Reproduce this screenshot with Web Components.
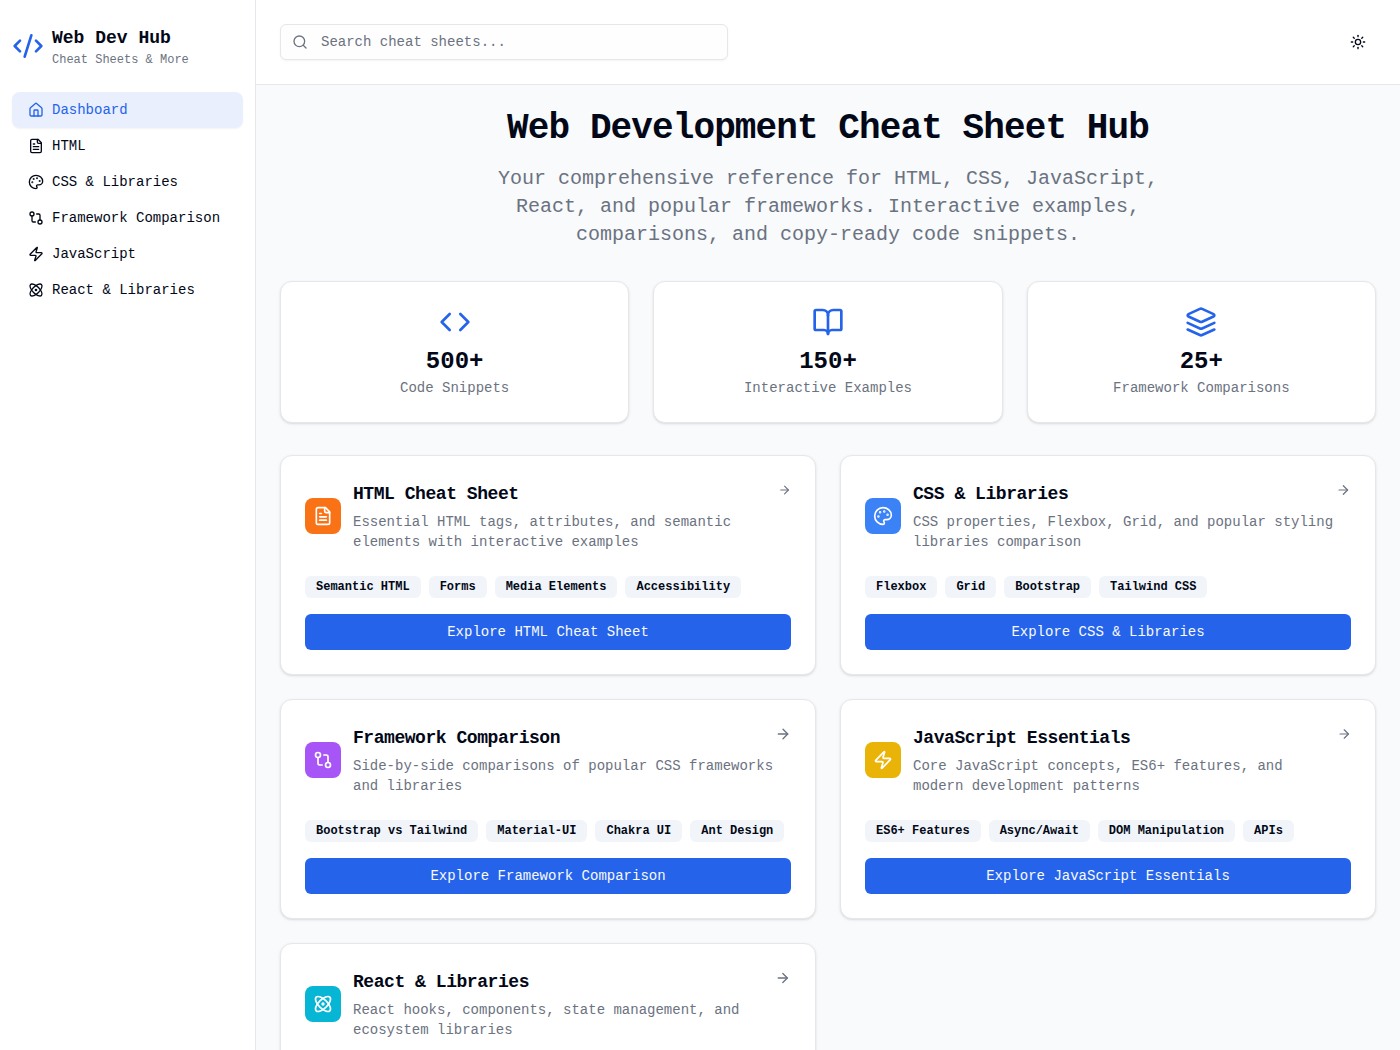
<!DOCTYPE html>
<html lang="en">
<head>
<meta charset="utf-8">
<title>Web Dev Hub</title>
<style>
    html, body { margin: 0; height: 100%; }
    body { font-family: "Liberation Mono", monospace; color: #020817; background: #fff; overflow: hidden; }
</style>
</head>
<body>
<dev-app>
    <app-sidebar slot="side">
        <nav-item icon="home" active>Dashboard</nav-item>
        <nav-item icon="file">HTML</nav-item>
        <nav-item icon="palette">CSS &amp; Libraries</nav-item>
        <nav-item icon="compare">Framework Comparison</nav-item>
        <nav-item icon="zap">JavaScript</nav-item>
        <nav-item icon="atom">React &amp; Libraries</nav-item>
    </app-sidebar>
    <top-bar slot="top"></top-bar>
    <hero-block heading="Web Development Cheat Sheet Hub">Your comprehensive reference for HTML, CSS, JavaScript, React, and popular frameworks. Interactive examples, comparisons, and copy-ready code snippets.</hero-block>
    <stat-row>
        <stat-card icon="code" value="500+">Code Snippets</stat-card>
        <stat-card icon="book" value="150+">Interactive Examples</stat-card>
        <stat-card icon="layers" value="25+">Framework Comparisons</stat-card>
    </stat-row>
    <sheet-grid>
        <sheet-card icon="file" color="#f97316" heading="HTML Cheat Sheet">
            Essential HTML tags, attributes, and semantic elements with interactive examples
            <tag-chip slot="tags">Semantic HTML</tag-chip>
            <tag-chip slot="tags">Forms</tag-chip>
            <tag-chip slot="tags">Media Elements</tag-chip>
            <tag-chip slot="tags">Accessibility</tag-chip>
        </sheet-card>
        <sheet-card icon="palette" color="#3b82f6" heading="CSS &amp; Libraries">
            CSS properties, Flexbox, Grid, and popular styling libraries comparison
            <tag-chip slot="tags">Flexbox</tag-chip>
            <tag-chip slot="tags">Grid</tag-chip>
            <tag-chip slot="tags">Bootstrap</tag-chip>
            <tag-chip slot="tags">Tailwind CSS</tag-chip>
        </sheet-card>
        <sheet-card icon="compare" color="#a855f7" heading="Framework Comparison">
            Side-by-side comparisons of popular CSS frameworks and libraries
            <tag-chip slot="tags">Bootstrap vs Tailwind</tag-chip>
            <tag-chip slot="tags">Material-UI</tag-chip>
            <tag-chip slot="tags">Chakra UI</tag-chip>
            <tag-chip slot="tags">Ant Design</tag-chip>
        </sheet-card>
        <sheet-card icon="zap" color="#eab308" heading="JavaScript Essentials">
            Core JavaScript concepts, ES6+ features, and modern development patterns
            <tag-chip slot="tags">ES6+ Features</tag-chip>
            <tag-chip slot="tags">Async/Await</tag-chip>
            <tag-chip slot="tags">DOM Manipulation</tag-chip>
            <tag-chip slot="tags">APIs</tag-chip>
        </sheet-card>
        <sheet-card icon="atom" color="#06b6d4" heading="React &amp; Libraries">
            React hooks, components, state management, and ecosystem libraries
        </sheet-card>
    </sheet-grid>
</dev-app>
<script>
const ICONS = {
    codexml: '<path d="m18 16 4-4-4-4"/><path d="m6 8-4 4 4 4"/><path d="m14.5 4-5 16"/>',
    code: '<path d="m16 18 6-6-6-6"/><path d="m8 6-6 6 6 6"/>',
    home: '<path d="M15 21v-8a1 1 0 0 0-1-1h-4a1 1 0 0 0-1 1v8"/><path d="M3 10a2 2 0 0 1 .709-1.528l7-5.999a2 2 0 0 1 2.582 0l7 5.999A2 2 0 0 1 21 10v9a2 2 0 0 1-2 2H5a2 2 0 0 1-2-2z"/>',
    file: '<path d="M15 2H6a2 2 0 0 0-2 2v16a2 2 0 0 0 2 2h12a2 2 0 0 0 2-2V7Z"/><path d="M14 2v4a2 2 0 0 0 2 2h4"/><path d="M10 9H8"/><path d="M16 13H8"/><path d="M16 17H8"/>',
    palette: '<circle cx="13.5" cy="6.5" r=".5" fill="currentColor"/><circle cx="17.5" cy="10.5" r=".5" fill="currentColor"/><circle cx="8.5" cy="7.5" r=".5" fill="currentColor"/><circle cx="6.5" cy="12.5" r=".5" fill="currentColor"/><path d="M12 2C6.5 2 2 6.5 2 12s4.5 10 10 10c.926 0 1.648-.746 1.648-1.688 0-.437-.18-.835-.437-1.125-.29-.289-.438-.652-.438-1.125a1.64 1.64 0 0 1 1.668-1.668h1.996c3.051 0 5.555-2.503 5.555-5.554C21.965 6.012 17.461 2 12 2z"/>',
    compare: '<circle cx="18" cy="18" r="3"/><circle cx="6" cy="6" r="3"/><path d="M13 6h3a2 2 0 0 1 2 2v7"/><path d="M11 18H8a2 2 0 0 1-2-2V9"/>',
    zap: '<path d="M4 14a1 1 0 0 1-.78-1.63l9.9-10.2a.5.5 0 0 1 .86.46l-1.92 6.02A1 1 0 0 0 13 10h7a1 1 0 0 1 .78 1.63l-9.9 10.2a.5.5 0 0 1-.86-.46l1.92-6.02A1 1 0 0 0 11 14z"/>',
    atom: '<circle cx="12" cy="12" r="1"/><path d="M20.2 20.2c2.04-2.03.02-7.36-4.5-11.9-4.54-4.52-9.87-6.54-11.9-4.5-2.04 2.03-.02 7.36 4.5 11.9 4.54 4.52 9.87 6.54 11.9 4.5Z"/><path d="M15.7 15.7c4.52-4.54 6.54-9.87 4.5-11.9-2.03-2.04-7.36-.02-11.9 4.5-4.52 4.54-6.54 9.87-4.5 11.9 2.03 2.04 7.36.02 11.9-4.5Z"/>',
    book: '<path d="M12 7v14"/><path d="M3 18a1 1 0 0 1-1-1V4a1 1 0 0 1 1-1h5a4 4 0 0 1 4 4 4 4 0 0 1 4-4h5a1 1 0 0 1 1 1v13a1 1 0 0 1-1 1h-6a3 3 0 0 0-3 3 3 3 0 0 0-3-3z"/>',
    layers: '<path d="m12.83 2.18a2 2 0 0 0-1.66 0L2.6 6.08a1 1 0 0 0 0 1.83l8.58 3.91a2 2 0 0 0 1.66 0l8.58-3.9a1 1 0 0 0 0-1.83Z"/><path d="m22 17.65-9.17 4.16a2 2 0 0 1-1.66 0L2 17.65"/><path d="m22 12.65-9.17 4.16a2 2 0 0 1-1.66 0L2 12.65"/>',
    search: '<path d="m21 21-4.3-4.3"/><circle cx="11" cy="11" r="8"/>',
    sun: '<circle cx="12" cy="12" r="4"/><path d="M12 2v2"/><path d="M12 20v2"/><path d="m4.93 4.93 1.41 1.41"/><path d="m17.66 17.66 1.41 1.41"/><path d="M2 12h2"/><path d="M20 12h2"/><path d="m6.34 17.66-1.41 1.41"/><path d="m19.07 4.93-1.41 1.41"/>',
    arrow: '<path d="M5 12h14"/><path d="m12 5 7 7-7 7"/>'
};

class UiIcon extends HTMLElement {
    connectedCallback() {
        var size = this.getAttribute("size") || 16;
        var shadowRoot = this.shadowRoot || this.attachShadow({ mode: 'open' });
        shadowRoot.innerHTML = `
            <style>
                :host { display: block; width: ${size}px; height: ${size}px; min-width: 0; }
                svg { display: block; width: 100%; height: 100%; }
            </style>
            <svg viewBox="0 0 24 24" fill="none" stroke="currentColor" stroke-width="2" stroke-linecap="round" stroke-linejoin="round">${ICONS[this.getAttribute("name")]}</svg>
        `;
    }
}
customElements.define('ui-icon', UiIcon);

class DevApp extends HTMLElement {
    constructor() {
        super();
        var shadowRoot = this.attachShadow({ mode: 'open' });
        shadowRoot.innerHTML = `
            <style>
                :host { display: flex; height: 1050px; overflow: hidden; }
                .right { flex: 1; min-width: 0; display: flex; flex-direction: column; }
                main { flex: 1; min-height: 0; overflow: hidden; background: #f8fafc; padding: 24px; }
            </style>
            <slot name="side"></slot>
            <div class="right">
                <slot name="top"></slot>
                <main><slot></slot></main>
            </div>
        `;
    }
}
customElements.define('dev-app', DevApp);

class AppSidebar extends HTMLElement {
    constructor() {
        super();
        var shadowRoot = this.attachShadow({ mode: 'open' });
        shadowRoot.innerHTML = `
            <style>
                :host { display: block; flex: none; box-sizing: border-box; width: 256px; height: 100%; background: #fff; border-right: 1px solid #e5e7eb; padding: 24px 12px; }
                .logo { display: flex; align-items: center; gap: 8px; color: #2563eb; margin-bottom: 24px; }
                .name { font-size: 18px; line-height: 28px; font-weight: 700; color: #020817; }
                .sub { font-size: 12px; line-height: 16px; color: #6b7280; }
                nav { display: flex; flex-direction: column; }
            </style>
            <div class="logo">
                <ui-icon name="codexml" size="32"></ui-icon>
                <div>
                    <div class="name">Web Dev Hub</div>
                    <div class="sub">Cheat Sheets &amp; More</div>
                </div>
            </div>
            <nav><slot></slot></nav>
        `;
    }
}
customElements.define('app-sidebar', AppSidebar);

class NavItem extends HTMLElement {
    connectedCallback() {
        var shadowRoot = this.shadowRoot || this.attachShadow({ mode: 'open' });
        shadowRoot.innerHTML = `
            <style>
                :host { display: flex; align-items: center; gap: 8px; height: 36px; padding: 0 16px; border-radius: 8px; font-size: 14px; color: #020817; }
                :host([active]) { background: #e9effd; color: #2563eb; box-shadow: 0 1px 2px rgba(0,0,0,.05); }
            </style>
            <ui-icon name="${this.getAttribute("icon")}"></ui-icon>
            <span><slot></slot></span>
        `;
    }
}
customElements.define('nav-item', NavItem);

class TopBar extends HTMLElement {
    constructor() {
        super();
        var shadowRoot = this.attachShadow({ mode: 'open' });
        shadowRoot.innerHTML = `
            <style>
                :host { display: flex; flex: none; align-items: center; justify-content: space-between; box-sizing: border-box; height: 85px; padding: 0 24px; background: #fff; border-bottom: 1px solid #e5e7eb; }
                .search { box-sizing: border-box; width: 448px; height: 36px; display: flex; align-items: center; gap: 13px; padding: 0 12px 0 11px; border: 1px solid #e5e7eb; border-radius: 6px; box-shadow: 0 1px 2px rgba(0,0,0,.05); font-size: 14px; color: #6b7280; background: #fefefe; }
                .theme { width: 36px; height: 36px; display: flex; align-items: center; justify-content: center; color: #020817; }
            </style>
            <div class="search">
                <ui-icon name="search"></ui-icon>
                <span>Search cheat sheets...</span>
            </div>
            <div class="theme"><ui-icon name="sun"></ui-icon></div>
        `;
    }
}
customElements.define('top-bar', TopBar);

class HeroBlock extends HTMLElement {
    connectedCallback() {
        var shadowRoot = this.shadowRoot || this.attachShadow({ mode: 'open' });
        shadowRoot.innerHTML = `
            <style>
                :host { display: block; text-align: center; margin-bottom: 32px; }
                h1 { margin: 0 0 16px; font-size: 36px; line-height: 40px; font-weight: 700; letter-spacing: -0.9px; color: #020817; }
                p { margin: 0 auto; max-width: 672px; font-size: 20px; line-height: 28px; color: #6b7280; }
            </style>
            <h1>${this.getAttribute("heading")}</h1>
            <p><slot></slot></p>
        `;
    }
}
customElements.define('hero-block', HeroBlock);

class StatRow extends HTMLElement {
    constructor() {
        super();
        var shadowRoot = this.attachShadow({ mode: 'open' });
        shadowRoot.innerHTML = `
            <style>
                :host { display: grid; grid-template-columns: repeat(3, 1fr); gap: 24px; margin-bottom: 32px; }
            </style>
            <slot></slot>
        `;
    }
}
customElements.define('stat-row', StatRow);

class StatCard extends HTMLElement {
    connectedCallback() {
        var shadowRoot = this.shadowRoot || this.attachShadow({ mode: 'open' });
        shadowRoot.innerHTML = `
            <style>
                :host { display: flex; flex-direction: column; align-items: center; padding: 24px; background: #fff; border: 1px solid #e5e7eb; border-radius: 12px; box-shadow: 0 1px 3px rgba(0,0,0,.1), 0 1px 2px -1px rgba(0,0,0,.1); text-align: center; }
                ui-icon { color: #2563eb; margin-bottom: 8px; }
                .value { font-size: 24px; line-height: 32px; font-weight: 700; color: #020817; }
                .label { font-size: 14px; line-height: 20px; color: #6b7280; }
            </style>
            <ui-icon name="${this.getAttribute("icon")}" size="32"></ui-icon>
            <div class="value">${this.getAttribute("value")}</div>
            <div class="label"><slot></slot></div>
        `;
    }
}
customElements.define('stat-card', StatCard);

class SheetGrid extends HTMLElement {
    constructor() {
        super();
        var shadowRoot = this.attachShadow({ mode: 'open' });
        shadowRoot.innerHTML = `
            <style>
                :host { display: grid; grid-template-columns: repeat(2, 1fr); gap: 24px; }
            </style>
            <slot></slot>
        `;
    }
}
customElements.define('sheet-grid', SheetGrid);

class SheetCard extends HTMLElement {
    connectedCallback() {
        var heading = this.getAttribute("heading").replace("&", "&amp;");
        // the last card runs off the bottom of the window, so it has no tags or button to show
        var foot = this.querySelector('[slot="tags"]') ? `
            <div class="tags"><slot name="tags"></slot></div>
            <div class="btn">Explore ${heading}</div>
        ` : '';
        var shadowRoot = this.shadowRoot || this.attachShadow({ mode: 'open' });
        shadowRoot.innerHTML = `
            <style>
                :host { display: block; box-sizing: border-box; height: 220px; padding: 24px; background: #fff; border: 1px solid #e5e7eb; border-radius: 12px; box-shadow: 0 1px 3px rgba(0,0,0,.1), 0 1px 2px -1px rgba(0,0,0,.1); }
                .head { display: flex; align-items: flex-start; justify-content: space-between; margin-bottom: 24px; }
                .left { display: flex; align-items: center; gap: 12px; }
                .badge { flex: none; width: 36px; height: 36px; border-radius: 8px; display: flex; align-items: center; justify-content: center; color: #fff; background: ${this.getAttribute("color")}; }
                h3 { margin: 0 0 4px; font-size: 18px; line-height: 28px; font-weight: 700; letter-spacing: -0.45px; color: #020817; }
                p { margin: 0; font-size: 14px; line-height: 20px; color: #6b7280; }
                .go { color: #6b7280; }
                .tags { display: flex; flex-wrap: wrap; gap: 8px; margin-bottom: 16px; }
                .btn { height: 36px; display: flex; align-items: center; justify-content: center; background: #2563eb; color: #f8fafc; border-radius: 6px; font-size: 14px; }
            </style>
            <div class="head">
                <div class="left">
                    <div class="badge"><ui-icon name="${this.getAttribute("icon")}" size="20"></ui-icon></div>
                    <div>
                        <h3>${heading}</h3>
                        <p><slot></slot></p>
                    </div>
                </div>
                <ui-icon class="go" name="arrow" size="20"></ui-icon>
            </div>
            ${foot}
        `;
    }
}
customElements.define('sheet-card', SheetCard);

class TagChip extends HTMLElement {
    constructor() {
        super();
        var shadowRoot = this.attachShadow({ mode: 'open' });
        shadowRoot.innerHTML = `
            <style>
                :host { display: block; padding: 3px 11px; background: #f1f5f9; border-radius: 6px; font-size: 12px; line-height: 16px; font-weight: 700; color: #020817; }
            </style>
            <slot></slot>
        `;
    }
}
customElements.define('tag-chip', TagChip);
</script>
</body>
</html>
